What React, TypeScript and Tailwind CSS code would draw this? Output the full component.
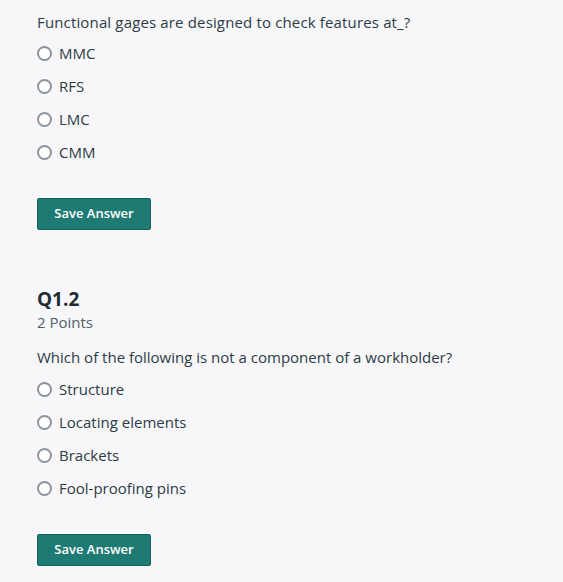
import React from 'react'

const font = { fontFamily: '"Open Sans", "Liberation Sans", sans-serif' }

function Option({ label }: { label: string }) {
  return (
    <label className="flex items-center h-[33px] cursor-pointer">
      <span className="w-[15px] h-[15px] rounded-full border-2 border-[#8d959b] bg-white mr-[7px]" />
      <span className="text-[15px] text-[#2d3b45]">{label}</span>
    </label>
  )
}

function SaveButton() {
  return (
    <button className="mt-[29px] w-[114px] h-[32px] bg-[#1e7b74] border border-[#16635d] rounded-[2px] text-white text-[13px] font-semibold">
      Save Answer
    </button>
  )
}

export default function App() {
  const q1 = ['MMC', 'RFS', 'LMC', 'CMM']
  const q2 = ['Structure', 'Locating elements', 'Brackets', 'Fool-proofing pins']
  return (
    <div className="min-h-screen bg-[#f7f7fa] px-[37px]" style={font}>
      <p className="pt-[11px] text-[15px] text-[#2d3b45] leading-[22px] tracking-[0.15px]">
        Functional gages are designed to check features at_?
      </p>
      <div className="mt-[4px]">
        {q1.map((o) => (
          <Option key={o} label={o} />
        ))}
      </div>
      <SaveButton />

      <h2 className="mt-[57px] text-[19px] font-bold text-[#1f2b33] leading-[24px]">Q1.2</h2>
      <p className="text-[15px] text-[#52616b] leading-[22px]">2 Points</p>
      <p className="mt-[13px] text-[15px] text-[#2d3b45] leading-[22px]">
        Which of the following is not a component of a workholder?
      </p>
      <div className="mt-[5px]">
        {q2.map((o) => (
          <Option key={o} label={o} />
        ))}
      </div>
      <SaveButton />
    </div>
  )
}
